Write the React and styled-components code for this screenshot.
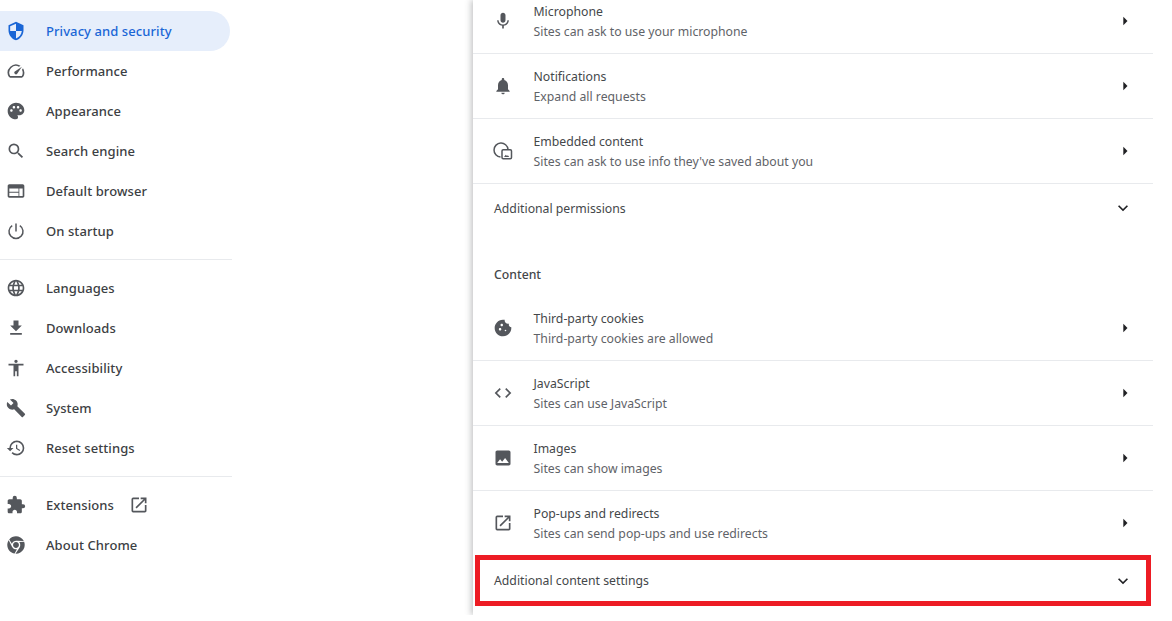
import React from 'react'
import styled, { createGlobalStyle } from 'styled-components'
import {
  MdSecurity, MdSpeed, MdPalette, MdSearch, MdWeb, MdLanguage, MdFileDownload,
  MdAccessibility, MdBuild, MdRestore, MdExtension, MdOpenInNew, MdMic,
  MdNotifications, MdCookie, MdCode, MdImage, MdArrowRight, MdExpandMore,
} from 'react-icons/md'
import { FaChrome } from 'react-icons/fa'

const GlobalStyle = createGlobalStyle`
  html, body {
    margin: 0;
    padding: 0;
    background: #fff;
    overflow: hidden;
  }
  body {
    font-family: "Noto Sans", "Open Sans", sans-serif;
    font-size: 13px;
    color: #1f1f1f;
  }
`

const Page = styled.div`
  display: flex;
  align-items: flex-start;
  width: 1172px;
  height: 621px;
  overflow: hidden;
`

const Sidebar = styled.nav`
  flex: 0 0 232px;
  padding-top: 11px;
`

const NavItem = styled.div`
  display: flex;
  align-items: center;
  height: 40px;
  width: 230px;
  padding-left: 6px;
  box-sizing: border-box;
  border-radius: 0 20px 20px 0;
  font-weight: 500;
  letter-spacing: 0.08px;
  color: ${p => (p.$active ? '#1a66d6' : '#3c4043')};
  background: ${p => (p.$active ? '#e6eefb' : 'transparent')};
  svg {
    flex: none;
    color: ${p => (p.$active ? '#1a66d6' : '#54575c')};
  }
`

const NavIcon = styled.span`
  display: flex;
  justify-content: center;
  width: 20px;
  margin-right: 20px;
`

const ExternalLink = styled.span`
  display: flex;
  margin-left: 15px;
  color: #54575c;
`

const NavDivider = styled.div`
  height: 1px;
  background: #e8eaed;
  margin: 8px 0;
`

const Card = styled.main`
  flex: 0 0 680px;
  height: 615px;
  margin-left: 241px;
  overflow: hidden;
  background: #fff;
  font-size: 12.25px;
  box-shadow: -2px 0 6px rgba(60, 64, 67, 0.3);
  clip-path: inset(0 0 0 -10px);
`

const List = styled.div`
  margin-top: -11px;
`

const Row = styled.div`
  display: flex;
  align-items: center;
  height: 64px;
  padding: 0 18px 0 20px;
  border-bottom: ${p => (p.$last ? 'none' : '1px solid #e8eaed')};
`

const RowIcon = styled.span`
  display: flex;
  justify-content: center;
  width: 20px;
  margin-right: 20.5px;
  color: #54575c;
`

const RowText = styled.div`
  flex: 1;
  line-height: 20px;
  padding-top: 2px;
`

const Title = styled.div`
  color: #44474a;
`

const Subtitle = styled.div`
  color: #5f6368;
`

const Arrow = styled.span`
  display: flex;
  color: #202124;
`

const ExpandRow = styled.div`
  display: flex;
  align-items: center;
  height: 48px;
  padding: 0 20px 0 21px;
  color: #44474a;
  span {
    flex: 1;
  }
  svg {
    color: #202124;
  }
`

const SectionLabel = styled.div`
  height: 64px;
  padding: 33px 21px 0;
  box-sizing: border-box;
  line-height: 20px;
  font-weight: 500;
  color: #44474a;
`

const Highlight = styled.div`
  display: flex;
  align-items: center;
  height: 51px;
  box-sizing: border-box;
  margin: 0 2px;
  padding: 0 13px 0 14px;
  border: 5px solid #ed1c24;
  color: #44474a;
  span {
    flex: 1;
  }
  svg {
    color: #202124;
  }
`

const EmbeddedIcon = () => (
  <svg width="20" height="20" viewBox="0 0 20 20" fill="none">
    <path d="M7.5 16A7 7 0 1 1 15 8.3" stroke="currentColor" strokeWidth="1.5" />
    <rect x="9" y="8.7" width="9.5" height="9" rx="1.2" fill="#fff" stroke="currentColor" strokeWidth="1.5" />
    <path d="M11 16l1.8-2.2 1.2 1.3.9-.8 1.3 1.7z" fill="currentColor" />
  </svg>
)

const PowerIcon = () => (
  <svg width="20" height="20" viewBox="0 0 20 20" fill="none" stroke="currentColor" strokeWidth="1.5">
    <path d="M10 2.5v8" />
    <path d="M13.8 4.6a7 7 0 1 1-7.6 0" />
  </svg>
)

const navTop = [
  { label: 'Performance', icon: <MdSpeed size={20} /> },
  { label: 'Appearance', icon: <MdPalette size={20} /> },
  { label: 'Search engine', icon: <MdSearch size={20} /> },
  { label: 'Default browser', icon: <MdWeb size={20} /> },
  { label: 'On startup', icon: <PowerIcon /> },
]

const navMiddle = [
  { label: 'Languages', icon: <MdLanguage size={20} /> },
  { label: 'Downloads', icon: <MdFileDownload size={20} /> },
  { label: 'Accessibility', icon: <MdAccessibility size={20} /> },
  { label: 'System', icon: <MdBuild size={20} /> },
  { label: 'Reset settings', icon: <MdRestore size={20} /> },
]

const permissions = [
  { title: 'Microphone', sub: 'Sites can ask to use your microphone', icon: <MdMic size={20} /> },
  { title: 'Notifications', sub: 'Expand all requests', icon: <MdNotifications size={20} /> },
  { title: 'Embedded content', sub: "Sites can ask to use info they've saved about you", icon: <EmbeddedIcon /> },
]

const content = [
  { title: 'Third-party cookies', sub: 'Third-party cookies are allowed', icon: <MdCookie size={20} /> },
  { title: 'JavaScript', sub: 'Sites can use JavaScript', icon: <MdCode size={20} /> },
  { title: 'Images', sub: 'Sites can show images', icon: <MdImage size={20} /> },
  { title: 'Pop-ups and redirects', sub: 'Sites can send pop-ups and use redirects', icon: <MdOpenInNew size={20} />, last: true },
]

const SettingRow = ({ item }) => (
  <Row $last={item.last}>
    <RowIcon>{item.icon}</RowIcon>
    <RowText>
      <Title>{item.title}</Title>
      <Subtitle>{item.sub}</Subtitle>
    </RowText>
    <Arrow><MdArrowRight size={20} /></Arrow>
  </Row>
)

const NavRow = ({ item, active, children }) => (
  <NavItem $active={active}>
    <NavIcon>{item.icon}</NavIcon>
    {item.label}
    {children}
  </NavItem>
)

export default function App() {
  return (
    <Page>
      <GlobalStyle />
      <Sidebar>
        <NavRow active item={{ label: 'Privacy and security', icon: <MdSecurity size={20} /> }} />
        {navTop.map(item => <NavRow key={item.label} item={item} />)}
        <NavDivider />
        {navMiddle.map(item => <NavRow key={item.label} item={item} />)}
        <NavDivider />
        <NavRow item={{ label: 'Extensions', icon: <MdExtension size={20} /> }}>
          <ExternalLink><MdOpenInNew size={20} /></ExternalLink>
        </NavRow>
        <NavRow item={{ label: 'About Chrome', icon: <FaChrome size={18} /> }} />
      </Sidebar>
      <Card>
        <List>
          {permissions.map(item => <SettingRow key={item.title} item={item} />)}
          <ExpandRow>
            <span>Additional permissions</span>
            <MdExpandMore size={20} />
          </ExpandRow>
          <SectionLabel>Content</SectionLabel>
          {content.map(item => <SettingRow key={item.title} item={item} />)}
          <Highlight>
            <span>Additional content settings</span>
            <MdExpandMore size={20} />
          </Highlight>
        </List>
      </Card>
    </Page>
  )
}
